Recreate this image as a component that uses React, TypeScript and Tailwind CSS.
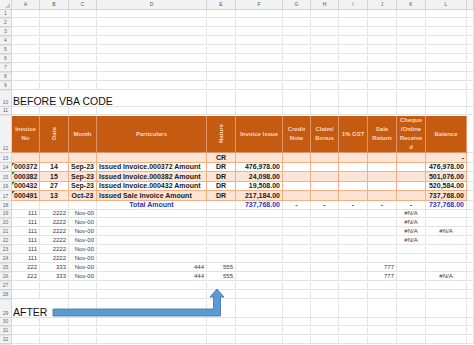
import React from "react";

const letters = ["", "A", "B", "C", "D", "E", "F", "G", "H", "I", "J", "K", "L", ""];

// row number -> height class
const heights: Record<number, string> = { 10: "h-[16px]", 12: "h-[37px]", 13: "h-[10px]", 15: "h-[10px]", 17: "h-[10px]", 29: "h-[18px]" };

const aligns = ["justify-start", "justify-center", "justify-center", "justify-start", "justify-center", "justify-end", "justify-center", "justify-center", "justify-center", "justify-center", "justify-center", "justify-end"];

const invoices: string[][] = [
  ["", "", "", "", "CR", "", "", "", "", "", "", "-"],
  ["000372", "14", "Sep-23", "Issued Invoice.000372 Amount", "DR", "476,978.00", "", "", "", "", "", "476,978.00"],
  ["000382", "15", "Sep-23", "Issued Invoice.000382 Amount", "DR", "24,098.00", "", "", "", "", "", "501,076.00"],
  ["000432", "27", "Sep-23", "Issued Invoice.000432 Amount", "DR", "19,508.00", "", "", "", "", "", "520,584.00"],
  ["000491", "13", "Oct-23", "Issued Sale Invoice Amount", "DR", "217,184.00", "", "", "", "", "", "737,768.00"],
];

const headers: { t: string[]; rot?: boolean }[] = [
  { t: ["Invoice", "No"] },
  { t: ["Date"], rot: true },
  { t: ["Month"] },
  { t: ["Particulars"] },
  { t: ["Nature"], rot: true },
  { t: ["Invoice Issue"] },
  { t: ["Credit", "Note"] },
  { t: ["Claim/", "Bonus"] },
  { t: ["1% GST"] },
  { t: ["Sale", "Return"] },
  { t: ["Cheque", "/Online", "Receive", "d"] },
  { t: ["Balance"] },
];

const gridCols = "grid grid-cols-[12px_28px_29px_28px_110px_29px_47px_28px_28px_29px_29px_29px_41px_1fr]";

const RowNum = ({ n }: { n: number }) => (
  <div className="flex items-end justify-center border-r border-b border-[#d4d4d4] bg-[#f2f2f2] pb-[1px] text-[5px] leading-none text-[#666]">
    {n}
  </div>
);

const Blank = ({ cls = "" }: { cls?: string }) => <div className={`border-r border-b border-[#e3e3e3] ${cls}`} />;

const Plain = ({ t, align }: { t: string; align: string }) => (
  <div className={`flex items-end ${align} border-r border-b border-[#e3e3e3] px-[2px] pb-[1px] text-[6px] leading-none text-[#3a3a3a] overflow-hidden whitespace-nowrap`}>
    {t}
  </div>
);

function lowerRow(n: number): (string | null)[] {
  const r: (string | null)[] = Array(13).fill(null);
  if (n >= 19 && n <= 24) {
    r[0] = "111"; r[1] = "2222"; r[2] = "Nov-00";
    if (n <= 22) r[10] = "#N/A";
    if (n === 21) r[11] = "#N/A";
  }
  if (n === 25 || n === 26) {
    r[0] = "222"; r[1] = "333"; r[2] = "Nov-00"; r[3] = "444"; r[4] = "555"; r[9] = "777";
    if (n === 26) r[11] = "#N/A";
  }
  return r;
}

const lowerAlign = (c: number) => (c === 10 || c === 11 ? "justify-center" : "justify-end");

function SheetRow({ n }: { n: number }) {
  const h = heights[n] ?? "h-[9px]";
  let cells: React.ReactNode;

  if (n === 10 || n === 29) {
    const span = n === 10 ? 4 : 2;
    cells = (
      <>
        <div className={`${span === 4 ? "col-span-4" : "col-span-2"} flex items-end border-r border-b border-[#e3e3e3] pl-[1px] text-[10.5px] leading-none text-[#111] whitespace-nowrap`}>
          {n === 10 ? "BEFORE VBA CODE" : "AFTER"}
        </div>
        {Array.from({ length: 13 - span - 1 + 1 }).map((_, i) => <Blank key={i} />)}
      </>
    );
  } else if (n === 12) {
    cells = (
      <>
        {headers.map((hd, i) => (
          <div key={i} className="flex items-center justify-center border-r border-b border-[#e0946a] bg-[#c55a11] text-center text-[6px] font-bold leading-[9px] text-[#fbd6bf]">
            {hd.rot ? (
              <span className="rotate-180 [writing-mode:vertical-rl]">{hd.t[0]}</span>
            ) : (
              <span>
                {hd.t.map((l, j) => (
                  <span key={j} className="block">{l}</span>
                ))}
              </span>
            )}
          </div>
        ))}
        <Blank />
      </>
    );
  } else if (n >= 13 && n <= 17) {
    const data = invoices[n - 13];
    const bg = n % 2 === 1 ? "bg-[#fce4d6]" : "bg-white";
    cells = (
      <>
        {data.map((t, i) => (
          <div key={i} className={`relative flex items-end ${aligns[i]} border-r border-b border-[#f4b084] ${bg} px-[2px] pb-[1px] text-[7px] font-bold leading-none text-[#1a1a1a] whitespace-nowrap`}>
            {i === 0 && t && <span className="absolute left-0 top-0 h-0 w-0 border-t-[3px] border-r-[3px] border-t-[#1f8a3a] border-r-transparent" />}
            {t}
          </div>
        ))}
        <Blank />
      </>
    );
  } else if (n === 18) {
    const tot: string[] = ["", "", "", "Total Amount", "", "737,768.00", "-", "-", "-", "-", "-", "737,768.00"];
    cells = (
      <>
        {tot.map((t, i) => (
          <div key={i} className={`flex items-end ${i === 3 ? "justify-center" : aligns[i]} border-r border-b border-[#e3e3e3] px-[2px] pb-[1px] text-[7px] font-bold leading-none text-[#2c36c4] whitespace-nowrap`}>
            {t}
          </div>
        ))}
        <Blank />
      </>
    );
  } else {
    const r = lowerRow(n);
    cells = (
      <>
        {r.map((t, i) => (t ? <Plain key={i} t={t} align={lowerAlign(i)} /> : <Blank key={i} />))}
        <Blank />
      </>
    );
  }

  return (
    <div className={`${gridCols} ${h}`}>
      <RowNum n={n} />
      {cells}
    </div>
  );
}

export default function App() {
  const rows = Array.from({ length: 32 }, (_, i) => i + 1);
  return (
    <div className="relative h-[345px] w-[474px] overflow-hidden bg-white font-['Liberation_Sans',Arial,sans-serif]">
      <div className={`${gridCols} h-[10px]`}>
        {letters.map((l, i) => (
          <div key={i} className="relative flex items-center justify-center border-r border-b border-[#d4d4d4] bg-[#f2f2f2] text-[5px] leading-none text-[#555]">
            {i === 0 && <span className="absolute bottom-[1px] right-[1px] h-0 w-0 border-b-[5px] border-l-[5px] border-b-[#c8c8c8] border-l-transparent" />}
            {l}
          </div>
        ))}
      </div>
      {rows.map((n) => (
        <SheetRow key={n} n={n} />
      ))}

      <svg className="absolute left-[50px] top-[286px]" width="180" height="34" viewBox="0 0 180 34">
        <path
          d="M3 23 L163.5 23 L163.5 11 L160 11 L167 3 L174 11 L170.5 11 L170.5 30 L3 30 Z"
          fill="#5b9bd5"
          stroke="#41719c"
          strokeWidth="0.8"
        />
      </svg>
    </div>
  );
}
